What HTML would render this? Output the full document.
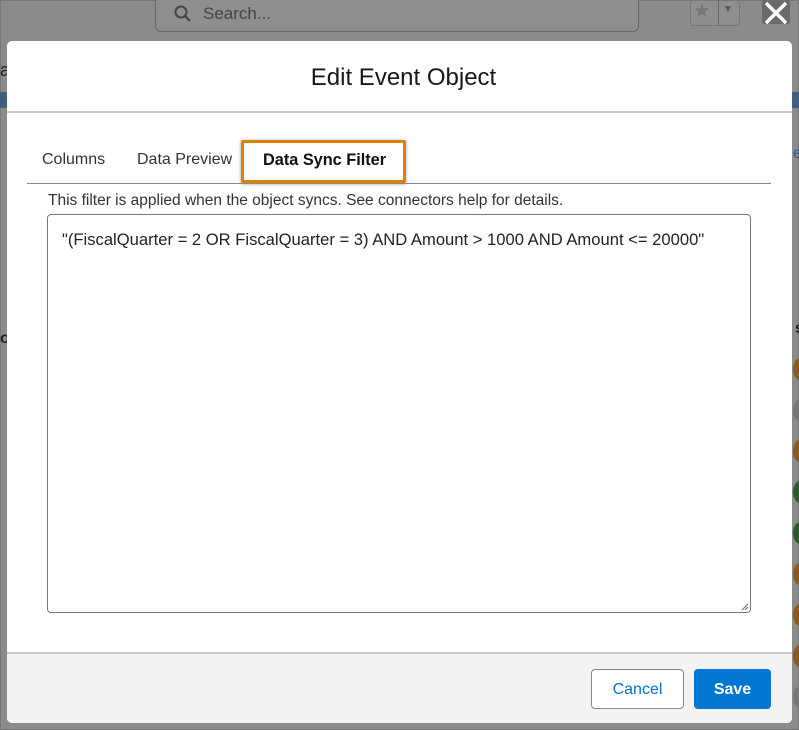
<!DOCTYPE html>
<html><head><style>
*{box-sizing:border-box;margin:0;padding:0}
body{width:799px;height:730px;background:#8b8b8b;font-family:"Liberation Sans",sans-serif;position:relative;overflow:hidden}
.abs{position:absolute}
.c{position:absolute;left:793px;width:14px;height:22px;border-radius:50%}
</style></head><body>
<div class="abs" style="left:0;top:0;width:799px;height:730px;border:1px solid #777"></div>
<div class="abs" style="left:155px;top:-10px;width:484px;height:42px;border:1px solid #666;border-radius:6px;background:#8e8e8e"></div>
<svg class="abs" style="left:174px;top:5px" width="18" height="18" viewBox="0 0 18 18"><circle cx="7" cy="7" r="5.5" fill="none" stroke="#444" stroke-width="2"/><path d="M11 11l5 5" stroke="#444" stroke-width="2.2"/></svg>
<div class="abs" style="left:203px;top:4px;font-size:17px;color:#444">Search...</div>
<div class="abs" style="left:690px;top:0;width:50px;height:26px;border:1px solid #777;border-radius:4px;background:#8e8e8e"></div>
<div class="abs" style="left:718px;top:0;width:1px;height:26px;background:#666"></div>
<div class="abs" style="left:693px;top:-2px;font-size:20px;color:#777">★</div>
<div class="abs" style="left:723px;top:4px;font-size:10px;color:#555">▼</div>
<div class="abs" style="left:762px;top:0;width:28px;height:24px;background:#6a6a6a;border-radius:3px"></div>
<svg class="abs" style="left:763px;top:1px" width="26" height="24" viewBox="0 0 26 24"><path d="M3 2l20 20M23 2L3 22" stroke="#fff" stroke-width="3.5"/></svg>
<div class="abs" style="left:0;top:92px;width:7px;height:16px;background:#3f5f80"></div>
<div class="abs" style="left:792px;top:92px;width:7px;height:16px;background:#3f5f80"></div>
<div class="abs" style="left:0;top:60px;font-size:18px;color:#222">a</div>
<div class="abs" style="left:0;top:330px;font-size:16px;color:#222;font-weight:bold">o</div>
<div class="abs" style="left:795px;top:320px;font-size:16px;color:#222;font-weight:bold">s</div>
<div class="abs" style="left:793px;top:145px;font-size:16px;color:#2a5a9a">e</div>
<div class="c" style="top:358px;background:#8a5a20"></div>
<div class="c" style="top:399px;background:#777"></div>
<div class="c" style="top:440px;background:#8a5a20"></div>
<div class="c" style="top:481px;background:#2f5a30"></div>
<div class="c" style="top:522px;background:#2f5a30"></div>
<div class="c" style="top:563px;background:#8a5a20"></div>
<div class="c" style="top:604px;background:#8a5a20"></div>
<div class="c" style="top:645px;background:#8a5a20"></div>
<div class="c" style="top:686px;background:#777"></div>

<div class="abs" style="left:7px;top:41px;width:785px;height:682px;background:#fff;border-radius:5px;overflow:hidden">
  <div class="abs" style="left:0;top:0;width:785px;height:72px;border-bottom:2px solid #ccc;text-align:center;font-size:24px;color:#181818;line-height:74px;padding-left:8px">Edit Event Object</div>
  <div class="abs" style="left:35px;top:110px;font-size:16px;color:#333">Columns</div>
  <div class="abs" style="left:130px;top:110px;font-size:16px;color:#333">Data Preview</div>
  <div class="abs" style="left:234px;top:99px;width:165px;height:43px;border:3px solid #e08000;border-radius:2px;box-shadow:0 1px 3px rgba(0,0,0,.4)"></div>
  <div class="abs" style="left:256px;top:110px;font-size:16.3px;color:#111;font-weight:bold">Data Sync Filter</div>
  <div class="abs" style="left:20px;top:142px;width:744px;height:1px;background:#888"></div>
  <div class="abs" style="left:41px;top:151px;font-size:15.5px;color:#333">This filter is applied when the object syncs. See connectors help for details.</div>
  <div class="abs" style="left:40px;top:173px;width:704px;height:399px;border:1px solid #777;border-radius:4px"></div>
  <div class="abs" style="left:55px;top:189px;font-size:16.6px;color:#222">"(FiscalQuarter = 2 OR FiscalQuarter = 3) AND Amount &gt; 1000 AND Amount &lt;= 20000"</div>
  <svg class="abs" style="left:734px;top:562px" width="8" height="8"><path d="M1 7L7 1M4 7L7 4" stroke="#666"/></svg>
  <div class="abs" style="left:0;top:611px;width:785px;height:71px;background:#f3f3f3;border-top:2px solid #ccc"></div>
  <div class="abs" style="left:584px;top:628px;width:93px;height:40px;border:1px solid #888;border-radius:4px;background:#fff;text-align:center;line-height:40px;font-size:16px;color:#0070d2">Cancel</div>
  <div class="abs" style="left:687px;top:628px;width:77px;height:40px;border-radius:4px;background:#0176d3;text-align:center;line-height:41px;font-size:16px;color:#fff;font-weight:bold">Save</div>
</div>
</body></html>
